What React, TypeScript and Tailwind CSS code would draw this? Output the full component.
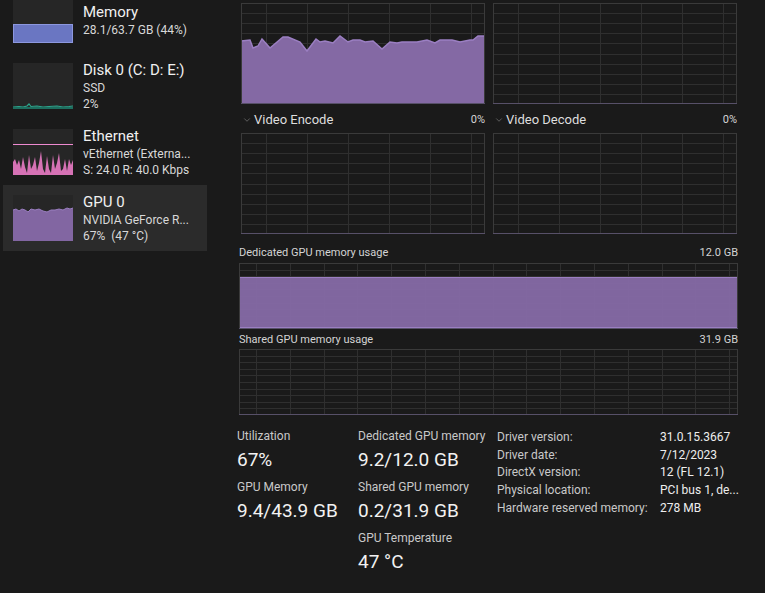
import { ChevronDown } from 'lucide-react';

const GPU_LINE: [number, number][] = [
  [0, 38], [9, 37], [12, 45], [17, 43], [21, 36], [29, 45], [42, 34], [47, 34],
  [59, 39], [66, 48], [75, 36], [79, 39], [84, 38], [92, 40], [99, 33], [107, 39],
  [112, 37], [119, 37], [124, 39], [132, 38], [141, 46], [149, 39], [156, 40],
  [161, 39], [176, 39], [186, 37], [194, 40], [199, 37], [211, 37], [219, 39],
  [229, 37], [232, 37], [237, 33], [244, 33],
];

interface GraphProps {
  w: number;
  h: number;
  rows: number;
  colStart: number;
  colStep: number;
  line?: [number, number][];
  fillTop?: number;
}

function Graph({ w, h, rows, colStart, colStep, line, fillTop }: GraphProps) {
  const cols: number[] = [];
  for (let x = colStart; x < w; x += colStep) cols.push(Math.round(x));
  const rowsY: number[] = [];
  for (let i = 1; i < rows; i++) rowsY.push(Math.round((h / rows) * i));

  return (
    <svg width={w} height={h} className="block shrink-0">
      {cols.map((x) => (
        <line key={'c' + x} x1={x + 0.5} x2={x + 0.5} y1={0} y2={h} stroke="#2f2f2f" />
      ))}
      {rowsY.map((y) => (
        <line key={'r' + y} x1={0} x2={w} y1={y + 0.5} y2={y + 0.5} stroke="#2f2f2f" />
      ))}
      {line && (
        <>
          <path
            d={`M0 ${h} ` + line.map(([x, y]) => `L${x} ${y}`).join(' ') + ` L${w} ${h} Z`}
            fill="#8469a4"
          />
          <polyline
            points={line.map(([x, y]) => `${x},${y}`).join(' ')}
            fill="none"
            stroke="#9b7fc2"
            strokeWidth={1.5}
          />
        </>
      )}
      {fillTop !== undefined && (
        <rect x={0.5} y={fillTop + 0.5} width={w - 1} height={h - fillTop - 2} fill="#8469a4" fillOpacity={0.97} stroke="#9b7fc2" />
      )}
      <rect x={0.5} y={0.5} width={w - 1} height={h - 1} fill="none" stroke="#3a3a3a" />
      <line x1={0} x2={w} y1={h - 0.5} y2={h - 0.5} stroke="#575068" />
    </svg>
  );
}

function Thumb({ kind }: { kind: 'memory' | 'disk' | 'ethernet' | 'gpu' }) {
  return (
    <svg width={60} height={46} className="block shrink-0">
      <rect x={0} y={0} width={60} height={46} fill="#262626" />
      {kind === 'memory' && (
        <rect x={0.5} y={27.5} width={59} height={18} fill="#6a76c2" stroke="#8c97de" />
      )}
      {kind === 'disk' && (
        <>
          <polyline
            points="0,44 6,43.5 10,44 14,43 16,41 18,43.5 24,43 30,44 36,43.5 44,43 50,44 56,43.5 60,43"
            fill="none"
            stroke="#2ca58d"
            strokeWidth={1.2}
          />
          <rect x={0} y={44} width={60} height={2} fill="#1d6e5f" />
        </>
      )}
      {kind === 'ethernet' && (
        <>
          <line x1={0} x2={60} y1={15.5} y2={15.5} stroke="#ee8ad0" />
          <polygon
            points="0,46 0,33 2,30 4,36 6,31 8,40 10,28 12,38 14,44 16,26 18,40 20,36 22,28 24,42 26,34 28,22 30,40 32,44 34,27 36,40 38,44 40,26 42,40 44,34 46,24 48,42 50,40 52,30 54,42 56,30 58,36 60,31 60,46"
            fill="#d672b5"
          />
        </>
      )}
      {kind === 'gpu' && (
        <>
          <polygon
            points="0,46 0,15 3,14 6,16 9,14 12,15 15,17 18,14 22,15 26,14 30,16 34,17 38,15 42,15 46,14 50,15 54,13 57,14 60,13 60,46"
            fill="#8266a2"
          />
          <polyline
            points="0,15 3,14 6,16 9,14 12,15 15,17 18,14 22,15 26,14 30,16 34,17 38,15 42,15 46,14 50,15 54,13 57,14 60,13"
            fill="none"
            stroke="#9a7ec0"
          />
        </>
      )}
    </svg>
  );
}

const sidebar = [
  { kind: 'memory' as const, title: 'Memory', lines: ['28.1/63.7 GB (44%)'] },
  { kind: 'disk' as const, title: 'Disk 0 (C: D: E:)', lines: ['SSD', '2%'] },
  { kind: 'ethernet' as const, title: 'Ethernet', lines: ['vEthernet (Externa...', 'S: 24.0 R: 40.0 Kbps'] },
  { kind: 'gpu' as const, title: 'GPU 0', lines: ['NVIDIA GeForce R...', '67%  (47 °C)'], selected: true },
];

function GraphLabel({ title }: { title: string }) {
  return (
    <div className="flex h-[29px] w-[244px] items-center justify-between pt-[3px]">
      <div className="flex items-center gap-[2px] pl-[1px]">
        <ChevronDown size={10} strokeWidth={1.25} className="text-[#9a9a9a]" />
        <span className="text-[13px] text-[#dedede]">{title}</span>
      </div>
      <span className="pr-[-2px] text-[11px] text-[#d6d6d6]">0%</span>
    </div>
  );
}

function Stat({ label, value }: { label: string; value: string }) {
  return (
    <div className="flex flex-col">
      <span className="text-[12px] leading-[16px] text-[#c9c9c9]">{label}</span>
      <span className="mt-[4px] text-[19px] leading-[24px] text-[#f2f2f2]">{value}</span>
    </div>
  );
}

const details = [
  ['Driver version:', '31.0.15.3667'],
  ['Driver date:', '7/12/2023'],
  ['DirectX version:', '12 (FL 12.1)'],
  ['Physical location:', 'PCI bus 1, de...'],
  ['Hardware reserved memory:', '278 MB'],
];

export default function App() {
  return (
    <div className="flex h-[593px] w-[765px] overflow-hidden bg-[#1a1a1a] font-['Segoe_UI',Roboto,'Noto_Sans',sans-serif] text-[#eeeeee]">
      <div className="mt-[-13px] flex w-[237px] shrink-0 flex-col pl-[3px]">
        {sidebar.map((item) => (
          <div
            key={item.title}
            className={`flex h-[66px] w-[204px] items-center gap-[10px] pl-[10px] ${item.selected ? 'bg-[#2b2b2b]' : ''}`}
          >
            <Thumb kind={item.kind} />
            <div className="flex flex-col">
              <span className="text-[15px] leading-[19px] text-[#f0f0f0]">{item.title}</span>
              {item.lines.map((l) => (
                <span key={l} className="whitespace-pre text-[12px] leading-[16px] text-[#d8d8d8]">
                  {l}
                </span>
              ))}
            </div>
          </div>
        ))}
      </div>

      <div className="flex w-[504px] flex-col pt-[3px]">
        <div className="flex gap-[8px] pl-[4px]">
          <Graph w={244} h={101} rows={10} colStart={25} colStep={41} line={GPU_LINE} />
          <Graph w={244} h={101} rows={10} colStart={25} colStep={41} />
        </div>
        <div className="flex gap-[8px] pl-[4px]">
          <GraphLabel title="Video Encode" />
          <GraphLabel title="Video Decode" />
        </div>
        <div className="flex gap-[8px] pl-[4px]">
          <Graph w={244} h={101} rows={10} colStart={25} colStep={41} />
          <Graph w={244} h={101} rows={10} colStart={25} colStep={41} />
        </div>

        <div className="flex h-[29px] w-[501px] items-end justify-between pb-[2px] pl-[2px] text-[11px] text-[#d4d4d4]">
          <span>Dedicated GPU memory usage</span>
          <span>12.0 GB</span>
        </div>
        <div className="pl-[2px]">
          <Graph w={499} h={66} rows={10} colStart={17} colStep={33.8} fillTop={14} />
        </div>
        <div className="flex h-[20px] w-[501px] items-center justify-between pl-[2px] pt-[3px] text-[11px] text-[#d4d4d4]">
          <span>Shared GPU memory usage</span>
          <span>31.9 GB</span>
        </div>
        <div className="pl-[2px]">
          <Graph w={499} h={66} rows={10} colStart={17} colStep={33.8} />
        </div>

        <div className="mt-[13px] flex">
          <div className="flex w-[121px] flex-col gap-[7px]">
            <Stat label="Utilization" value="67%" />
            <Stat label="GPU Memory" value="9.4/43.9 GB" />
          </div>
          <div className="flex w-[139px] flex-col gap-[7px]">
            <Stat label="Dedicated GPU memory" value="9.2/12.0 GB" />
            <Stat label="Shared GPU memory" value="0.2/31.9 GB" />
            <Stat label="GPU Temperature" value="47 °C" />
          </div>
          <div className="flex flex-col">
            {details.map(([k, v]) => (
              <div key={k} className="flex h-[17.75px] items-center text-[12px]">
                <span className="w-[163px] text-[#c9c9c9]">{k}</span>
                <span className="text-[#eeeeee]">{v}</span>
              </div>
            ))}
          </div>
        </div>
      </div>
    </div>
  );
}
